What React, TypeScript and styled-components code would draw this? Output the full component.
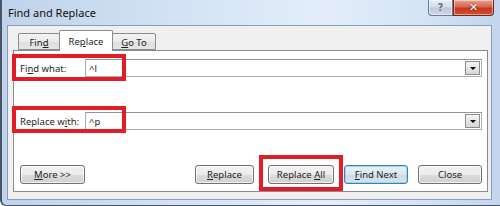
import React from "react";
import styled, { createGlobalStyle } from "styled-components";

const GlobalStyle = createGlobalStyle`
  html, body {
    margin: 0;
    padding: 0;
  }
  body {
    width: 500px;
    height: 206px;
    overflow: hidden;
    font-family: "Noto Sans", "Open Sans", sans-serif;
    font-size: 9.5px;
    color: #1e1e1e;
  }
`;

const Window = styled.div`
  width: 500px;
  height: 206px;
  box-sizing: border-box;
  display: flex;
  flex-direction: column;
  background: linear-gradient(to right, #bfd3ec 0%, #d3e2f4 35%, #e4eefa 65%, #d4e3f5 85%, #c2d5ed 100%);
  border-left: 2px solid #4a5565;
  border-bottom: 1px solid #4a5565;
  border-bottom-left-radius: 6px;
`;

const TitleBar = styled.div`
  height: 25px;
  flex-shrink: 0;
  display: flex;
  align-items: flex-start;
  padding: 0 6px 0 6px;
`;

const Title = styled.div`
  flex: 1;
  font-size: 11px;
  line-height: 25px;
  color: #111;
`;

const CaptionButton = styled.div<{ $close?: boolean }>`
  height: 16px;
  width: ${(p) => (p.$close ? "41px" : "25px")};
  box-sizing: border-box;
  display: flex;
  align-items: center;
  justify-content: center;
  border: 1px solid ${(p) => (p.$close ? "#6b2b22" : "#6d7b8d")};
  border-top: none;
  border-radius: ${(p) => (p.$close ? "0 0 4px 0" : "0 0 0 4px")};
  background: ${(p) =>
    p.$close
      ? "linear-gradient(to bottom, #e8a493 0%, #d7654e 45%, #c8381d 55%, #d24f33 100%)"
      : "linear-gradient(to bottom, #e6edf5 0%, #d2dde9 45%, #bfccdb 55%, #cdd8e5 100%)"};
  box-shadow: inset 0 0 0 1px rgba(255, 255, 255, 0.45);
  color: ${(p) => (p.$close ? "#fff" : "#5c6b7e")};
  font-family: "DejaVu Sans", sans-serif;
  font-weight: bold;
  font-size: ${(p) => (p.$close ? "11px" : "10px")};
  text-shadow: ${(p) => (p.$close ? "0 0 2px #5a1a10" : "0 0 1px #fff")};
`;

const Client = styled.div`
  flex: 1;
  display: flex;
  flex-direction: column;
  margin: 0 8px 5px 5px;
  padding: 4px 3px 7px 5px;
  background: #f0f0f0;
  border: 1px solid #8a9db6;
`;

const TabStrip = styled.div`
  height: 20px;
  display: flex;
  align-items: flex-end;
  padding-left: 6px;
  position: relative;
  z-index: 1;
`;

const Tab = styled.div<{ $active?: boolean; $w: number }>`
  box-sizing: border-box;
  width: ${(p) => p.$w}px;
  height: ${(p) => (p.$active ? "21px" : "17px")};
  margin-bottom: ${(p) => (p.$active ? "-1px" : "0")};
  display: flex;
  align-items: center;
  justify-content: center;
  border: 1px solid #898c95;
  border-bottom: ${(p) => (p.$active ? "none" : "1px solid #898c95")};
  margin-left: -1px;
  border-radius: 2px 2px 0 0;
  background: ${(p) =>
    p.$active ? "#ffffff" : "linear-gradient(to bottom, #f3f3f3 0%, #ebebeb 50%, #dedede 51%, #e5e5e5 100%)"};
  padding-top: ${(p) => (p.$active ? "0" : "1px")};
`;

const Panel = styled.div`
  flex: 1;
  display: flex;
  flex-direction: column;
  background: #fff;
  border: 1px solid #898c95;
  padding: 7px 5px 7px 6px;
`;

const FieldRow = styled.div<{ $gap?: number }>`
  position: relative;
  display: flex;
  align-items: center;
  height: 18px;
  margin-top: ${(p) => p.$gap ?? 0}px;
`;

const Label = styled.div`
  width: 65px;
  flex-shrink: 0;
`;

const Combo = styled.div`
  flex: 1;
  height: 18px;
  box-sizing: border-box;
  display: flex;
  align-items: center;
  border: 1px solid #abadb3;
  border-top-color: #8f9194;
  padding: 0 1px 0 3px;
  background: #fff;
`;

const ComboText = styled.div`
  flex: 1;
`;

const DropButton = styled.div`
  width: 15px;
  height: 14px;
  box-sizing: border-box;
  display: flex;
  align-items: center;
  justify-content: center;
  border: 1px solid #8d8d8d;
  background: linear-gradient(to bottom, #f4f4f4 0%, #e6e6e6 50%, #d6d6d6 100%);
`;

const Arrow = styled.div`
  width: 0;
  height: 0;
  border-left: 3px solid transparent;
  border-right: 3px solid transparent;
  border-top: 3px solid #000;
`;

const Highlight = styled.div<{ $top: number; $left: number; $w: number; $h: number }>`
  position: absolute;
  top: ${(p) => p.$top}px;
  left: ${(p) => p.$left}px;
  width: ${(p) => p.$w}px;
  height: ${(p) => p.$h}px;
  box-sizing: border-box;
  border: 4px solid #e11d25;
  pointer-events: none;
`;

const ButtonRow = styled.div`
  margin-top: auto;
  display: flex;
  align-items: center;
  height: 19px;
`;

const Spacer = styled.div`
  flex: 1;
`;

const ButtonSlot = styled.div<{ $gap?: number }>`
  position: relative;
  margin-left: ${(p) => p.$gap ?? 0}px;
`;

const Button = styled.div<{ $w: number; $default?: boolean }>`
  width: ${(p) => p.$w}px;
  height: 19px;
  box-sizing: border-box;
  display: flex;
  align-items: center;
  justify-content: center;
  border: 1px solid ${(p) => (p.$default ? "#3c7fb1" : "#707070")};
  border-radius: 3px;
  background: ${(p) =>
    p.$default
      ? "linear-gradient(to bottom, #eaf1f6 0%, #dfe8ef 50%, #cfdbe5 51%, #d8e3ec 100%)"
      : "linear-gradient(to bottom, #f2f2f2 0%, #ebebeb 50%, #dddddd 51%, #cfcfcf 100%)"};
  box-shadow: inset 0 0 0 1px ${(p) => (p.$default ? "#9cd6f2" : "rgba(255,255,255,0.7)")};
  color: #1e1e1e;
`;

const U = styled.span`
  text-decoration: underline;
  text-underline-offset: 1px;
`;

export default function App() {
  return (
    <>
      <GlobalStyle />
      <Window>
        <TitleBar>
          <Title>Find and Replace</Title>
          <CaptionButton>?</CaptionButton>
          <CaptionButton $close>✕</CaptionButton>
        </TitleBar>
        <Client>
          <TabStrip>
            <Tab $w={42}>
              Fin<U>d</U>
            </Tab>
            <Tab $active $w={54}>
              Re<U>p</U>lace
            </Tab>
            <Tab $w={44}>
              <U>G</U>o To
            </Tab>
          </TabStrip>
          <Panel>
            <FieldRow $gap={1}>
              <Label>
                Fi<U>n</U>d what:
              </Label>
              <Combo>
                <ComboText>^l</ComboText>
                <DropButton>
                  <Arrow />
                </DropButton>
              </Combo>
              <Highlight $top={-5} $left={-8} $w={114} $h={27} />
            </FieldRow>
            <FieldRow $gap={35}>
              <Label>
                Replace w<U>i</U>th:
              </Label>
              <Combo>
                <ComboText>^p</ComboText>
                <DropButton>
                  <Arrow />
                </DropButton>
              </Combo>
              <Highlight $top={-6} $left={-8} $w={114} $h={27} />
            </FieldRow>
            <ButtonRow>
              <Button $w={65}>
                <span>
                  <U>M</U>ore &gt;&gt;
                </span>
              </Button>
              <Spacer />
              <ButtonSlot>
                <Button $w={59}>
                  <span>
                    <U>R</U>eplace
                  </span>
                </Button>
              </ButtonSlot>
              <ButtonSlot $gap={14}>
                <Button $w={66}>
                  <span>
                    Replace <U>A</U>ll
                  </span>
                </Button>
                <Highlight $top={-10} $left={-9} $w={84} $h={36} />
              </ButtonSlot>
              <ButtonSlot $gap={10}>
                <Button $w={64} $default>
                  <span>
                    <U>F</U>ind Next
                  </span>
                </Button>
              </ButtonSlot>
              <ButtonSlot $gap={10}>
                <Button $w={64}>Close</Button>
              </ButtonSlot>
            </ButtonRow>
          </Panel>
        </Client>
      </Window>
    </>
  );
}
